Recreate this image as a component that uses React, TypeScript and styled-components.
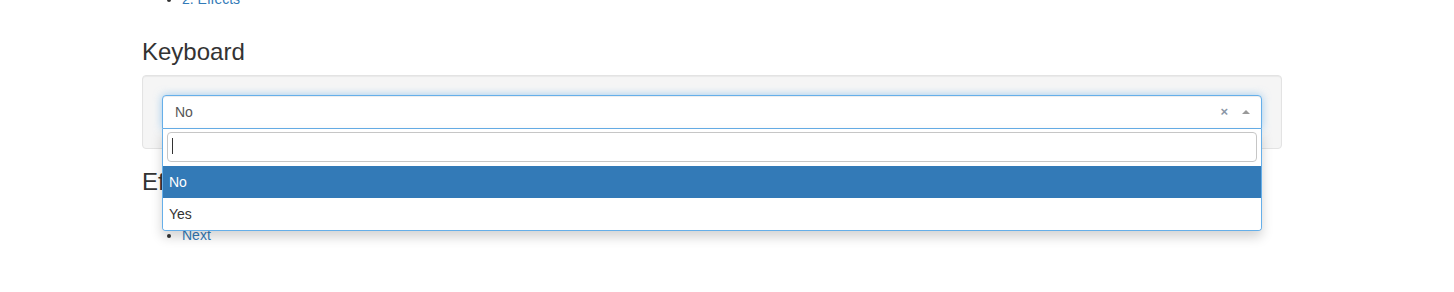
import React from "react";
import styled, { createGlobalStyle } from "styled-components";

const GlobalStyle = createGlobalStyle`
  html, body { margin: 0; padding: 0; background: #fff; }
  body {
    font-family: "Liberation Sans", Arial, sans-serif;
    font-size: 14px;
    line-height: 1.42857;
    color: #333;
    overflow: hidden;
  }
  * { box-sizing: border-box; }
`;

const Page = styled.div`
  width: 1140px;
  margin-left: 142px;
`;

const List = styled.ul<{ $top?: number; $bottom?: number }>`
  margin: ${(p) => p.$top ?? 0}px 0 ${(p) => p.$bottom ?? 10}px 0;
  padding-left: 40px;
`;

const Item = styled.li``;

const Link = styled.a`
  color: #337ab7;
  text-decoration: none;
`;

const Heading = styled.h3`
  font-size: 24px;
  font-weight: 500;
  line-height: 1.1;
  margin: 20px 0 10px;
  color: #333;
`;

const Well = styled.div`
  min-height: 20px;
  padding: 19px;
  margin-bottom: 20px;
  background: #f5f5f5;
  border: 1px solid #e3e3e3;
  border-radius: 4px;
  box-shadow: inset 0 1px 1px rgba(0, 0, 0, 0.05);
`;

const SelectWrap = styled.div`
  position: relative;
  width: 100%;
`;

const Selection = styled.div`
  display: flex;
  align-items: center;
  height: 34px;
  padding: 0 11px 0 12px;
  background: #fff;
  border: 1px solid #66afe9;
  border-radius: 4px 4px 0 0;
  box-shadow: inset 0 1px 1px rgba(0, 0, 0, 0.075), 0 0 8px rgba(102, 175, 233, 0.6);
`;

const Rendered = styled.span`
  flex: 1;
  color: #555;
  line-height: 20px;
`;

const Clear = styled.span`
  color: #8a96a6;
  font-weight: bold;
  font-size: 13px;
  line-height: 20px;
  margin-right: 14px;
`;

const Arrow = styled.span`
  width: 0;
  height: 0;
  border-style: solid;
  border-width: 0 4px 4px 4px;
  border-color: transparent transparent #999 transparent;
`;

const Dropdown = styled.div`
  position: absolute;
  top: 100%;
  left: 0;
  right: 0;
  z-index: 10;
  background: #fff;
  border: 1px solid #66afe9;
  border-top: none;
  border-radius: 0 0 4px 4px;
  box-shadow: 0 6px 12px rgba(0, 0, 0, 0.175);
  overflow: hidden;
`;

const SearchBox = styled.div`
  position: relative;
  padding: 3px 4px 4px;
`;

const SearchInput = styled.input`
  display: block;
  width: 100%;
  height: 30px;
  padding: 4px;
  margin: 0;
  font-family: inherit;
  font-size: 14px;
  border: 1px solid #c6c6c6;
  border-radius: 4px;
  outline: none;
  background: #fff;
`;

const Caret = styled.span`
  position: absolute;
  left: 9px;
  top: 9px;
  width: 1px;
  height: 16px;
  background: #333;
`;

const Options = styled.ul`
  list-style: none;
  margin: 0;
  padding: 0;
`;

const Option = styled.li<{ $active?: boolean }>`
  padding: 6px;
  line-height: 20px;
  color: ${(p) => (p.$active ? "#fff" : "#333")};
  background: ${(p) => (p.$active ? "#337ab7" : "#fff")};
`;

export default function App() {
  return (
    <>
      <GlobalStyle />
      <Page>
        <List $top={-10} $bottom={29}>
          <Item>
            <Link href="#effects">2. Effects</Link>
          </Item>
        </List>
        <Heading>Keyboard</Heading>
        <Well>
          <SelectWrap>
            <Selection>
              <Rendered>No</Rendered>
              <Clear>×</Clear>
              <Arrow />
            </Selection>
            <Dropdown>
              <SearchBox>
                <SearchInput type="search" readOnly />
                <Caret />
              </SearchBox>
              <Options>
                <Option $active>No</Option>
                <Option>Yes</Option>
              </Options>
            </Dropdown>
          </SelectWrap>
        </Well>
        <Heading>Effects</Heading>
        <List>
          <Item>
            <Link href="#prev">Previous</Link>
          </Item>
          <Item>
            <Link href="#next">Next</Link>
          </Item>
        </List>
      </Page>
    </>
  );
}
